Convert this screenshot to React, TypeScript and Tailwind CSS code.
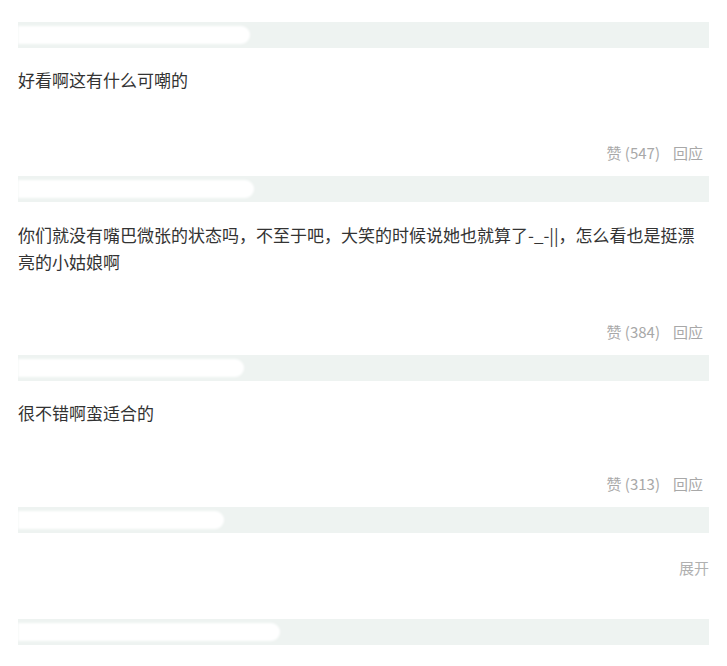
import React from "react";

const font = { fontFamily: '"Noto Sans CJK SC", "Liberation Sans", sans-serif' };

function Bar({ blot }: { blot: string }) {
  return (
    <div className="h-[26px] bg-[#eef3f1] flex items-center overflow-hidden">
      <div className={`${blot} h-[18px] bg-white rounded-r-full blur-[1px]`} />
    </div>
  );
}

function Actions({ count }: { count: number }) {
  return (
    <div className="flex justify-end items-center h-[20px] pr-[6px] text-[15px] text-[#a8a8a8] leading-[20px]">
      <span>赞 ({count})</span>
      <span className="ml-[13px]">回应</span>
    </div>
  );
}

export default function App() {
  return (
    <div className="min-h-[666px] bg-white pt-[22px] pl-[18px] pr-[18px] text-[#333]" style={font}>
      <Bar blot="w-[232px]" />
      <div className="pt-[19px] text-[17px] leading-[26px] pr-[4px]">好看啊这有什么可嘲的</div>
      <div className="mt-[50px]"><Actions count={547} /></div>
      <div className="mt-[13px]"><Bar blot="w-[236px]" /></div>
      <div className="pt-[19px] text-[17px] leading-[27px] pr-[4px]">
        你们就没有嘴巴微张的状态吗，不至于吧，大笑的时候说她也就算了-_-||，怎么看也是挺漂亮的小姑娘啊
      </div>
      <div className="mt-[47px]"><Actions count={384} /></div>
      <div className="mt-[13px]"><Bar blot="w-[226px]" /></div>
      <div className="pt-[19px] text-[17px] leading-[26px] pr-[4px]">很不错啊蛮适合的</div>
      <div className="mt-[48px]"><Actions count={313} /></div>
      <div className="mt-[13px]"><Bar blot="w-[206px]" /></div>
      <div className="flex justify-end pt-[25px] text-[15px] leading-[20px] text-[#b0b0b0]">展开</div>
      <div className="mt-[41px]"><Bar blot="w-[262px]" /></div>
    </div>
  );
}
